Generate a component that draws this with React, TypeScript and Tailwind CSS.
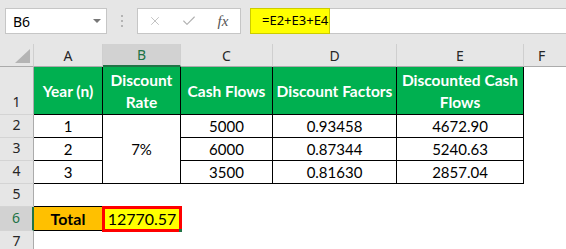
import { X, Check } from "lucide-react";

const colHead =
  "flex items-center justify-center border-r border-b border-r-[#cfcfcf] border-b-[#ababab] bg-[#e6e6e6] font-['Noto_Sans',sans-serif] text-[14px] text-[#262626]";
const rowHead =
  "flex items-end justify-center pb-[2px] border-r border-b border-r-[#ababab] border-b-[#d4d4d4] bg-[#e6e6e6] font-['Noto_Sans',sans-serif] text-[14px] text-[#262626]";
const green =
  "flex items-center justify-center border-r border-b border-black bg-[#00b050] text-center text-[15.5px] font-bold leading-[22px] text-white";
const cell = "flex items-center justify-center border-r border-b border-black text-[15px] text-black";

export default function App() {
  return (
    <div className="h-[249px] w-[566px] overflow-hidden bg-white font-['Lato',sans-serif]">
      {/* formula bar */}
      <div className="flex h-[44px] bg-[#e6e6e6] pt-2 font-['Noto_Sans',sans-serif]">
        <div className="ml-[5px] flex h-[26px] w-[102px] items-center justify-between border border-[#c6c6c6] bg-white pl-[7px] pr-[5px]">
          <span className="text-[14px] text-black">B6</span>
          <svg width="8" height="4" viewBox="0 0 8 4">
            <path d="M0 0h8L4 4z" fill="#777" />
          </svg>
        </div>
        <div className="ml-[14px] flex h-[26px] w-[2px] flex-col items-center justify-center gap-[3px]">
          <span className="h-[2px] w-[2px] bg-[#b4b4b4]" />
          <span className="h-[2px] w-[2px] bg-[#b4b4b4]" />
          <span className="h-[2px] w-[2px] bg-[#b4b4b4]" />
        </div>
        <div className="ml-[14px] flex h-[26px] w-[104px] items-center border border-[#c6c6c6] bg-white">
          <span className="flex w-[36px] justify-center">
            <X size={14} strokeWidth={1.3} color="#b0b0b0" />
          </span>
          <span className="flex w-[36px] justify-center">
            <Check size={16} strokeWidth={1.6} color="#b0b0b0" />
          </span>
          <span className="flex w-[36px] justify-center font-['Liberation_Serif',serif] text-[15px] italic text-[#555]">
            fx
          </span>
        </div>
        <div className="ml-[9px] flex h-[26px] flex-1 border-y border-[#c6c6c6] bg-white">
          <div className="-my-px flex w-[80px] items-center border border-[#cccc00] bg-[#ffff00] pl-[11px] text-[13px] text-black">
            =E2+E3+E4
          </div>
        </div>
      </div>

      {/* sheet */}
      <div className="grid grid-cols-[34px_69px_78px_92px_124px_127px_1fr] grid-rows-[23px_48px_23px_23px_23px_23px_24px_23px]">
        <div className="flex items-end justify-end border-r border-b border-r-[#cfcfcf] border-b-[#ababab] bg-[#e6e6e6] pb-[3px] pr-[3px]">
          <svg width="15" height="14" viewBox="0 0 15 14">
            <path d="M15 0V14H0z" fill="#b4b4b4" />
          </svg>
        </div>
        <div className={colHead}>A</div>
        <div className="flex items-center justify-center border-r border-b-2 border-r-[#cfcfcf] border-b-[#217346] bg-[#d2d2d2] font-['Noto_Sans',sans-serif] text-[14px] text-[#217346]">
          B
        </div>
        <div className={colHead}>C</div>
        <div className={colHead}>D</div>
        <div className={colHead}>E</div>
        <div className="flex items-center justify-start border-b border-b-[#ababab] bg-[#e6e6e6] pl-[14px] font-['Noto_Sans',sans-serif] text-[14px] text-[#262626]">
          F
        </div>

        {/* row 1 */}
        <div className={rowHead}>1</div>
        <div className={green}>Year (n)</div>
        <div className={green}>
          Discount
          <br />
          Rate
        </div>
        <div className={green}>Cash Flows</div>
        <div className={`${green} whitespace-nowrap`}>Discount Factors</div>
        <div className={`${green} whitespace-nowrap`}>
          Discounted Cash
          <br />
          Flows
        </div>
        <div />

        {/* row 2 */}
        <div className={rowHead}>2</div>
        <div className={cell}>1</div>
        <div className={`${cell} row-span-3`}>7%</div>
        <div className={cell}>5000</div>
        <div className={cell}>0.93458</div>
        <div className={cell}>4672.90</div>
        <div />

        {/* row 3 */}
        <div className={rowHead}>3</div>
        <div className={cell}>2</div>
        <div className={cell}>6000</div>
        <div className={cell}>0.87344</div>
        <div className={cell}>5240.63</div>
        <div />

        {/* row 4 */}
        <div className={rowHead}>4</div>
        <div className={cell}>3</div>
        <div className={cell}>3500</div>
        <div className={cell}>0.81630</div>
        <div className={cell}>2857.04</div>
        <div />

        {/* row 5 */}
        <div className={rowHead}>5</div>
        <div className="border-b border-black" />
        <div />
        <div />
        <div />
        <div />
        <div />

        {/* row 6 */}
        <div className="flex items-end justify-center border-r-2 border-b border-r-[#217346] border-b-[#d4d4d4] bg-[#d2d2d2] pb-[2px] font-['Noto_Sans',sans-serif] text-[14px] text-[#217346]">
          6
        </div>
        <div className="flex items-center justify-center border-r border-b border-black bg-[#ffc000] text-[16px] font-bold text-black">
          Total
        </div>
        <div className="relative -m-px flex items-center justify-center border-[3px] border-[#ff0000] bg-[#ffff00] text-[16px] text-black">
          12770.57
          <span className="absolute -right-[3px] -bottom-[3px] h-[3px] w-[3px] bg-[#217346]" />
        </div>
        <div />
        <div />
        <div />
        <div />

        {/* row 7 */}
        <div className={rowHead}>7</div>
        <div />
        <div />
        <div />
        <div />
        <div />
        <div />
      </div>
    </div>
  );
}
